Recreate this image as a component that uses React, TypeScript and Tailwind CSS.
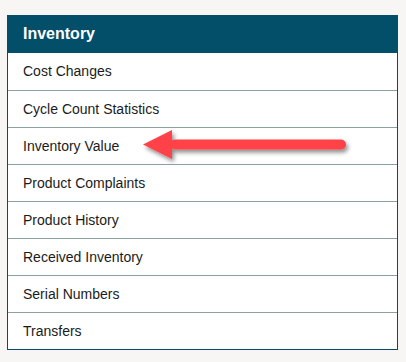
import React from "react";

const items = [
  "Cost Changes",
  "Cycle Count Statistics",
  "Inventory Value",
  "Product Complaints",
  "Product History",
  "Received Inventory",
  "Serial Numbers",
  "Transfers",
];

const Arrow = () => (
  <svg
    className="absolute left-[136px] top-[124px]"
    width="222"
    height="44"
    viewBox="0 0 222 44"
  >
    <defs>
      <filter id="sh" x="-10%" y="-30%" width="130%" height="180%">
        <feDropShadow dx="2" dy="3" stdDeviation="2" floodColor="#000" floodOpacity="0.45" />
      </filter>
    </defs>
    <g filter="url(#sh)">
      <path d="M7 20.5 L36 6 L36 35 Z" fill="#fe4246" />
      <rect x="34" y="15.5" width="176" height="10" rx="5" fill="#fe4246" />
    </g>
  </svg>
);

export default function App() {
  return (
    <div
      className="relative w-[406px] h-[362px] bg-[#f7f6f4] pt-[15px] pl-[7px]"
      style={{ fontFamily: "Arial, 'Liberation Sans', sans-serif" }}
    >
      <div className="w-[391px] border-x border-b border-[#0b4a62] bg-white">
        <div className="h-[38px] -mx-px px-[16px] bg-[#034e69] flex items-center text-white font-bold text-[16px]">
          Inventory
        </div>
        {items.map((it, i) => (
          <div
            key={it}
            className={`h-[37px] px-[15px] flex items-center text-[14px] text-[#1b1b1b] ${
              i > 0 ? "border-t border-[#8da0a1]" : ""
            }`}
          >
            {it}
          </div>
        ))}
      </div>
      <Arrow />
    </div>
  );
}
